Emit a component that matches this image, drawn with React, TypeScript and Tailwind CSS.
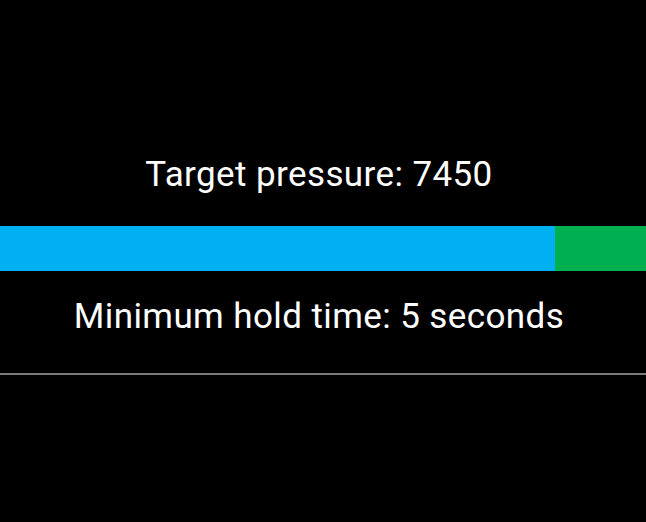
export default function App() {
  const target = 7450;
  const holdSeconds = 5;
  const progress = 555 / 646;

  return (
    <div className="h-[522px] w-[646px] bg-black text-white" style={{ fontFamily: "Roboto, 'Noto Sans', sans-serif" }}>
      <div className="pt-[155px]">
        <div className="pr-[8px] text-center text-[35px] leading-[40px] tracking-[0.4px]">Target pressure: {target}</div>
        <div className="mt-[31px] flex h-[45px] w-full bg-[#00b050]">
          <div className="h-full bg-[#00b0f0]" style={{ width: `${progress * 100}%` }} />
        </div>
        <div className="mt-[26px] pr-[8px] text-center text-[35px] leading-[40px] tracking-[0.4px]">
          Minimum hold time: {holdSeconds} seconds
        </div>
        <div className="mt-[36px] h-[2px] w-full bg-[#7a7a7a]" />
      </div>
    </div>
  );
}
